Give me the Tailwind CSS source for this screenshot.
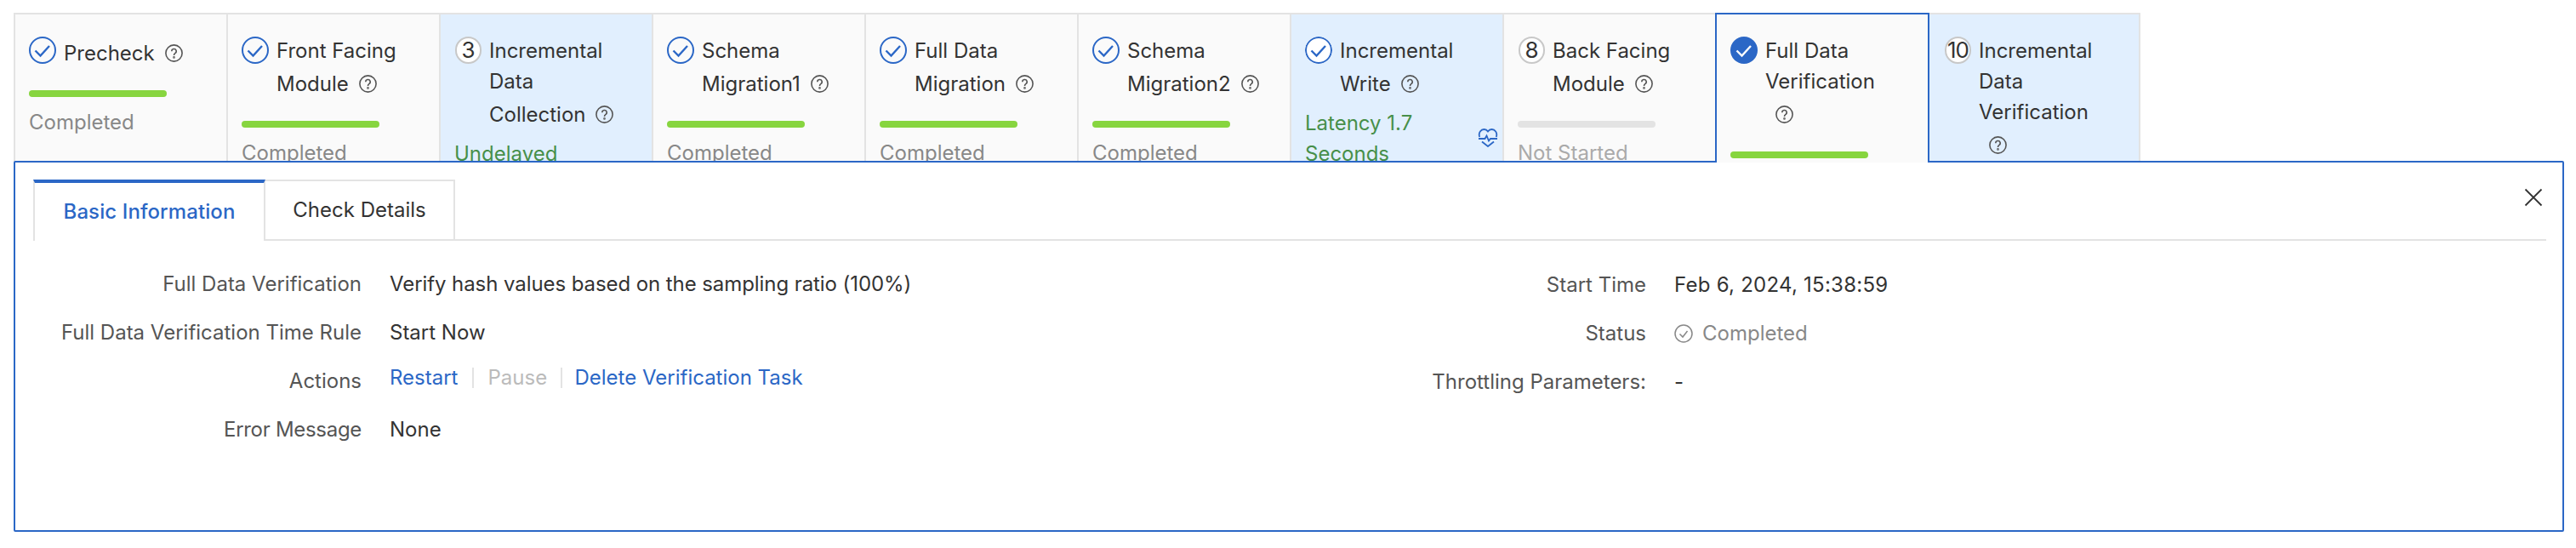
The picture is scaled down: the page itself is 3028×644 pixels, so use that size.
<!DOCTYPE html>
<html lang="en">
<head>
<meta charset="utf-8">
<title>Full Data Verification</title>
<script src="https://cdn.jsdelivr.net/npm/@tailwindcss/browser@4"></script>
</head>
<body class="bg-white font-[Inter,sans-serif] text-[24px] leading-[36px] text-[#333] overflow-hidden">
<div class="w-[3028px] h-[644px] pt-[15px] pl-[16px]">
  <!-- Steps -->
  <div class="flex h-[176px] w-[2500px]">
    <div class="relative w-[250px] h-[176px] overflow-hidden bg-[#fafafa] border-t-2 border-l-2 border-[#e3e3e3] pl-[16px] pt-[25px]">
      <div class="flex gap-[9px]">
        <svg class="w-[32px] h-[32px] mt-[1px] shrink-0" viewBox="0 0 32 32" fill="none" stroke="#2b67c6" stroke-width="2"><circle cx="16" cy="16" r="15"/><path d="M7.5 16.5 13.5 22.5 24 11" stroke-width="2.4"/></svg>
        <div class="w-[156px] -mb-[2px]">Precheck<svg class="inline-block w-[21px] h-[21px] ml-[12px] mt-[10px] align-[-2px]" viewBox="0 0 21 21" fill="none" stroke="#555" stroke-width="1.6"><circle cx="10.5" cy="10.5" r="9.6"/><path d="M7.8 8.2a2.7 2.7 0 1 1 4 2.4c-1 .6-1.3 1-1.3 2.4"/><circle cx="10.5" cy="15.4" r=".5"/></svg></div>
      </div>
      <div class="w-[162px] h-[8px] mt-[27px] rounded-full bg-[#87d53f]"></div>
      <div class="mt-[12px] text-[#888]">Completed</div>
    </div>
    <div class="relative w-[250px] h-[176px] overflow-hidden bg-[#fafafa] border-t-2 border-l-2 border-[#e3e3e3] pl-[16px] pt-[25px]">
      <div class="flex gap-[9px]">
        <svg class="w-[32px] h-[32px] mt-[1px] shrink-0" viewBox="0 0 32 32" fill="none" stroke="#2b67c6" stroke-width="2"><circle cx="16" cy="16" r="15"/><path d="M7.5 16.5 13.5 22.5 24 11" stroke-width="2.4"/></svg>
        <div class="w-[156px] -mb-[2px]">Front Facing Module<svg class="inline-block w-[21px] h-[21px] ml-[12px] mt-[10px] align-[-2px]" viewBox="0 0 21 21" fill="none" stroke="#555" stroke-width="1.6"><circle cx="10.5" cy="10.5" r="9.6"/><path d="M7.8 8.2a2.7 2.7 0 1 1 4 2.4c-1 .6-1.3 1-1.3 2.4"/><circle cx="10.5" cy="15.4" r=".5"/></svg></div>
      </div>
      <div class="w-[162px] h-[8px] mt-[27px] rounded-full bg-[#87d53f]"></div>
      <div class="mt-[12px] text-[#888]">Completed</div>
    </div>
    <div class="relative w-[250px] h-[176px] overflow-hidden bg-[#e1effe] border-t-2 border-l-2 border-[#e3e3e3] pl-[16px] pt-[25px]">
      <div class="flex gap-[9px]">
        <div class="w-[31px] h-[32px] mt-[1px] ml-[1px] shrink-0 rounded-full bg-white border-2 border-[#c8c8c8] flex items-center justify-center text-[26px] text-[#333]">3</div>
        <div class="w-[156px] -mb-[2px]">Incremental Data Collection<svg class="inline-block w-[21px] h-[21px] ml-[12px] mt-[10px] align-[-2px]" viewBox="0 0 21 21" fill="none" stroke="#555" stroke-width="1.6"><circle cx="10.5" cy="10.5" r="9.6"/><path d="M7.8 8.2a2.7 2.7 0 1 1 4 2.4c-1 .6-1.3 1-1.3 2.4"/><circle cx="10.5" cy="15.4" r=".5"/></svg></div>
      </div>
      <div class="mt-[12px] text-[#478f4a]">Undelayed</div>
    </div>
    <div class="relative w-[250px] h-[176px] overflow-hidden bg-[#fafafa] border-t-2 border-l-2 border-[#e3e3e3] pl-[16px] pt-[25px]">
      <div class="flex gap-[9px]">
        <svg class="w-[32px] h-[32px] mt-[1px] shrink-0" viewBox="0 0 32 32" fill="none" stroke="#2b67c6" stroke-width="2"><circle cx="16" cy="16" r="15"/><path d="M7.5 16.5 13.5 22.5 24 11" stroke-width="2.4"/></svg>
        <div class="w-[156px] -mb-[2px]">Schema Migration1<svg class="inline-block w-[21px] h-[21px] ml-[12px] mt-[10px] align-[-2px]" viewBox="0 0 21 21" fill="none" stroke="#555" stroke-width="1.6"><circle cx="10.5" cy="10.5" r="9.6"/><path d="M7.8 8.2a2.7 2.7 0 1 1 4 2.4c-1 .6-1.3 1-1.3 2.4"/><circle cx="10.5" cy="15.4" r=".5"/></svg></div>
      </div>
      <div class="w-[162px] h-[8px] mt-[27px] rounded-full bg-[#87d53f]"></div>
      <div class="mt-[12px] text-[#888]">Completed</div>
    </div>
    <div class="relative w-[250px] h-[176px] overflow-hidden bg-[#fafafa] border-t-2 border-l-2 border-[#e3e3e3] pl-[16px] pt-[25px]">
      <div class="flex gap-[9px]">
        <svg class="w-[32px] h-[32px] mt-[1px] shrink-0" viewBox="0 0 32 32" fill="none" stroke="#2b67c6" stroke-width="2"><circle cx="16" cy="16" r="15"/><path d="M7.5 16.5 13.5 22.5 24 11" stroke-width="2.4"/></svg>
        <div class="w-[156px] -mb-[2px]">Full Data Migration<svg class="inline-block w-[21px] h-[21px] ml-[12px] mt-[10px] align-[-2px]" viewBox="0 0 21 21" fill="none" stroke="#555" stroke-width="1.6"><circle cx="10.5" cy="10.5" r="9.6"/><path d="M7.8 8.2a2.7 2.7 0 1 1 4 2.4c-1 .6-1.3 1-1.3 2.4"/><circle cx="10.5" cy="15.4" r=".5"/></svg></div>
      </div>
      <div class="w-[162px] h-[8px] mt-[27px] rounded-full bg-[#87d53f]"></div>
      <div class="mt-[12px] text-[#888]">Completed</div>
    </div>
    <div class="relative w-[250px] h-[176px] overflow-hidden bg-[#fafafa] border-t-2 border-l-2 border-[#e3e3e3] pl-[16px] pt-[25px]">
      <div class="flex gap-[9px]">
        <svg class="w-[32px] h-[32px] mt-[1px] shrink-0" viewBox="0 0 32 32" fill="none" stroke="#2b67c6" stroke-width="2"><circle cx="16" cy="16" r="15"/><path d="M7.5 16.5 13.5 22.5 24 11" stroke-width="2.4"/></svg>
        <div class="w-[156px] -mb-[2px]">Schema Migration2<svg class="inline-block w-[21px] h-[21px] ml-[12px] mt-[10px] align-[-2px]" viewBox="0 0 21 21" fill="none" stroke="#555" stroke-width="1.6"><circle cx="10.5" cy="10.5" r="9.6"/><path d="M7.8 8.2a2.7 2.7 0 1 1 4 2.4c-1 .6-1.3 1-1.3 2.4"/><circle cx="10.5" cy="15.4" r=".5"/></svg></div>
      </div>
      <div class="w-[162px] h-[8px] mt-[27px] rounded-full bg-[#87d53f]"></div>
      <div class="mt-[12px] text-[#888]">Completed</div>
    </div>
    <div class="relative w-[250px] h-[176px] overflow-hidden bg-[#e1effe] border-t-2 border-l-2 border-[#e3e3e3] pl-[16px] pt-[25px]">
      <div class="flex gap-[9px]">
        <svg class="w-[32px] h-[32px] mt-[1px] shrink-0 bg-white rounded-full" viewBox="0 0 32 32" fill="none" stroke="#2b67c6" stroke-width="2"><circle cx="16" cy="16" r="15"/><path d="M7.5 16.5 13.5 22.5 24 11" stroke-width="2.4"/></svg>
        <div class="w-[156px] -mb-[2px]">Incremental Write<svg class="inline-block w-[21px] h-[21px] ml-[12px] mt-[10px] align-[-2px]" viewBox="0 0 21 21" fill="none" stroke="#555" stroke-width="1.6"><circle cx="10.5" cy="10.5" r="9.6"/><path d="M7.8 8.2a2.7 2.7 0 1 1 4 2.4c-1 .6-1.3 1-1.3 2.4"/><circle cx="10.5" cy="15.4" r=".5"/></svg></div>
      </div>
      <div class="mt-[12px] w-[190px] text-[#478f4a]">Latency 1.7 Seconds</div>
      <svg class="absolute left-[219px] top-[134px] w-[24px] h-[22px]" viewBox="0 0 24 22" fill="none" stroke="#2b67c6" stroke-width="1.8"><path d="M2.2 10C.4 4.5 4 1 7.5 1c2 0 3.5 1 4.5 2.5C13 2 14.500 1 16.500 1 20 1 23.600 4.500 21.800 10"/><path d="M1 12h7.500l2-3.500 2.500 6 2-2.500h8"/><path d="M5 15.500l7 5.500 7-5.500"/></svg>
    </div>
    <div class="relative w-[250px] h-[176px] overflow-hidden bg-[#fafafa] border-t-2 border-l-2 border-[#e3e3e3] pl-[16px] pt-[25px]">
      <div class="flex gap-[9px]">
        <div class="w-[31px] h-[32px] mt-[1px] ml-[1px] shrink-0 rounded-full bg-white border-2 border-[#c8c8c8] flex items-center justify-center text-[26px] text-[#333]">8</div>
        <div class="w-[156px] -mb-[2px]">Back Facing Module<svg class="inline-block w-[21px] h-[21px] ml-[12px] mt-[10px] align-[-2px]" viewBox="0 0 21 21" fill="none" stroke="#555" stroke-width="1.6"><circle cx="10.5" cy="10.5" r="9.6"/><path d="M7.8 8.2a2.7 2.7 0 1 1 4 2.4c-1 .6-1.3 1-1.3 2.4"/><circle cx="10.5" cy="15.4" r=".5"/></svg></div>
      </div>
      <div class="w-[162px] h-[8px] mt-[27px] rounded-full bg-[#e3e3e3]"></div>
      <div class="mt-[12px] text-[#aaa]">Not Started</div>
    </div>
    <div class="relative z-10 w-[252px] h-[176px] overflow-hidden bg-[#fafafa] border-t-2 border-x-2 border-[#2b67c6] pl-[16px] pt-[25px]">
      <div class="flex gap-[9px]">
        <svg class="w-[32px] h-[32px] mt-[1px] shrink-0" viewBox="0 0 32 32" fill="none"><circle cx="16" cy="16" r="16" fill="#2b67c6"/><path d="M7.500 16.500 13.500 22.500 24 11" stroke="#fff" stroke-width="2.400"/></svg>
        <div class="w-[156px] -mb-[2px]">Full Data Verification<svg class="inline-block w-[21px] h-[21px] ml-[12px] mt-[10px] align-[-2px]" viewBox="0 0 21 21" fill="none" stroke="#555" stroke-width="1.6"><circle cx="10.5" cy="10.5" r="9.6"/><path d="M7.8 8.2a2.7 2.7 0 1 1 4 2.4c-1 .6-1.3 1-1.3 2.4"/><circle cx="10.5" cy="15.4" r=".5"/></svg></div>
      </div>
      <div class="w-[162px] h-[8px] mt-[27px] rounded-full bg-[#87d53f]"></div>
      <div class="mt-[12px] text-[#888]">Completed</div>
    </div>
    <div class="relative w-[248px] h-[176px] overflow-hidden bg-[#e1effe] border-t-2 border-r-2 border-[#e3e3e3] pl-[17px] pt-[25px]">
      <div class="flex gap-[9px]">
        <div class="w-[31px] h-[32px] mt-[1px] ml-[1px] shrink-0 rounded-full bg-white border-2 border-[#c8c8c8] flex items-center justify-center text-[26px] tracking-[-1px] text-[#333]">10</div>
        <div class="w-[156px] -mb-[2px]">Incremental Data Verification<svg class="inline-block w-[21px] h-[21px] ml-[12px] mt-[10px] align-[-2px]" viewBox="0 0 21 21" fill="none" stroke="#555" stroke-width="1.6"><circle cx="10.5" cy="10.5" r="9.6"/><path d="M7.8 8.2a2.7 2.7 0 1 1 4 2.4c-1 .6-1.3 1-1.3 2.4"/><circle cx="10.5" cy="15.4" r=".5"/></svg></div>
      </div>
    </div>
  </div>
  <!-- Panel -->
  <div class="relative -mt-[2px] w-[2998px] h-[436px] bg-white border-2 border-[#2b67c6] rounded-[2px] pt-[20px] pl-[21px] pr-[19px]">
    <svg class="absolute right-[23px] top-[30px] w-[22px] h-[22px]" viewBox="0 0 22 22" fill="none" stroke="#333" stroke-width="1.8"><path d="M1.500 1.500 20.500 20.500M20.500 1.500 1.500 20.500"/></svg>
    <div class="flex h-[72px] border-b-2 border-[#e3e3e3]">
      <div class="w-[273px] h-[72px] bg-white border-l-2 border-r-2 border-[#e3e3e3] border-t-4 border-t-[#2b67c6] flex items-center justify-center text-[#2b67c6] font-medium tracking-[0.1px]">Basic Information</div>
      <div class="w-[223px] h-[70px] border-t-2 border-r-2 border-[#e3e3e3] flex items-center justify-center">Check Details</div>
    </div>
    <div class="flex mt-[23px]">
      <div class="w-[1476px]">
        <div class="flex gap-[33px] h-[56px] items-center"><div class="w-[386px] text-right text-[#555]">Full Data Verification</div><div class="tracking-[-0.08px]">Verify hash values based on the sampling ratio (100%)</div></div>
        <div class="flex gap-[33px] h-[57px] items-center"><div class="w-[386px] text-right text-[#555]">Full Data Verification Time Rule</div><div>Start Now</div></div>
        <div class="flex gap-[33px] h-[57px] items-center"><div class="w-[386px] text-right text-[#555]">Actions</div>
          <div class="flex items-center -mt-[8px]"><span class="text-[#2b67c6]">Restart</span><span class="w-[2px] h-[24px] bg-[#e3e3e3] ml-[17px] mr-[16px]"></span><span class="w-[68px] text-[#bbb]">Pause</span><span class="w-[2px] h-[24px] bg-[#e3e3e3] ml-[18px] mr-[14px]"></span><span class="text-[#2b67c6]">Delete Verification Task</span></div></div>
        <div class="flex gap-[33px] h-[57px] items-center"><div class="w-[386px] text-right text-[#555] tracking-[-0.3px]">Error Message</div><div>None</div></div>
      </div>
      <div class="flex-1">
        <div class="flex gap-[33px] h-[57px] items-center"><div class="w-[420px] text-right text-[#555]">Start Time</div><div class="tracking-[0.25px]">Feb 6, 2024, 15:38:59</div></div>
        <div class="flex gap-[33px] h-[57px] items-center"><div class="w-[420px] text-right text-[#555]">Status</div><div class="flex items-center gap-[11px] text-[#888]"><svg class="w-[22px] h-[22px]" viewBox="0 0 22 22" fill="none" stroke="#888" stroke-width="1.500"><circle cx="11" cy="11" r="10"/><path d="M6.500 11.500 10 15 15.500 8"/></svg>Completed</div></div>
        <div class="flex gap-[33px] h-[57px] items-center"><div class="w-[420px] text-right text-[#555]">Throttling Parameters:</div><div>-</div></div>
      </div>
    </div>
  </div>
</div>
</body>
</html>
